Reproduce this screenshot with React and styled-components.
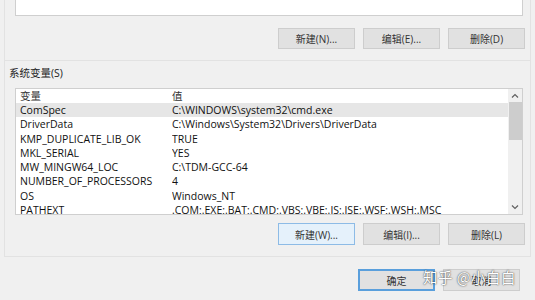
import React from "react"
import styled, { createGlobalStyle } from "styled-components"

const GlobalStyle = createGlobalStyle`
  html, body {
    margin: 0;
    padding: 0;
    background: #f0f0f0;
  }
  body {
    font-family: "Open Sans", "Noto Sans CJK SC", sans-serif;
    color: #111;
  }
`

const Dialog = styled.div`
  position: relative;
  width: 535px;
  height: 300px;
  overflow: hidden;
  background: #f0f0f0;
  padding-left: 4px;
  box-sizing: border-box;
`

const Group = styled.section`
  width: 527px;
  box-sizing: border-box;
  border: 1px solid #e2e2e2;
  border-top: none;
  padding: 0 7px 11px 10px;
  display: flex;
  flex-direction: column;
`

const GroupLabel = styled.div`
  font-size: 10.5px;
  line-height: 14px;
  height: 14px;
  margin: 5px 0 8px -6px;
  color: #222;
`

const ListBox = styled.div`
  position: relative;
  width: 508px;
  height: ${(p) => p.$height}px;
  box-sizing: border-box;
  background: #fff;
  border: 1px solid #cfcfcf;
  border-top: ${(p) => (p.$cut ? "none" : "1px solid #cfcfcf")};
  overflow: hidden;
`

const Rows = styled.div`
  margin-right: 14px;
`

const Row = styled.div`
  display: grid;
  grid-template-columns: 152px 1fr;
  height: ${(p) => (p.$head ? 14 : 14.3)}px;
  line-height: ${(p) => (p.$head ? 14 : 14.3)}px;
  padding-left: 4px;
  font-size: 10.5px;
  white-space: nowrap;
  background: ${(p) => (p.$selected ? "#e6e6e6" : "transparent")};
  color: ${(p) => (p.$head ? "#333" : "#111")};
`

const Cell = styled.span`
  overflow: hidden;
`

const ScrollBar = styled.div`
  position: absolute;
  top: 0;
  right: 0;
  bottom: 0;
  width: 14px;
  background: #f0f0f0;
  display: flex;
  flex-direction: column;
  align-items: center;
`

const Arrow = styled.div`
  height: 13px;
  display: flex;
  align-items: center;
  justify-content: center;
`

const Thumb = styled.div`
  width: 13px;
  height: 38px;
  background: #cdcdcd;
`

const Track = styled.div`
  flex: 1;
`

const ButtonRow = styled.div`
  display: flex;
  justify-content: flex-end;
  gap: 8px;
  margin-top: ${(p) => p.$top}px;
  margin-right: -2px;
`

const Button = styled.div`
  width: 77px;
  height: ${(p) => p.$h || 22}px;
  box-sizing: border-box;
  display: flex;
  align-items: center;
  justify-content: center;
  font-size: 10px;
  color: #333;
  background: ${(p) => (p.$focus ? "#e5f1fb" : "#e1e1e1")};
  border: ${(p) =>
    p.$default
      ? "2px solid #5a9fdc"
      : p.$focus
      ? "1px solid #8dbbe6"
      : "1px solid #cdcdcd"};
`

const Footer = styled.div`
  display: flex;
  justify-content: flex-end;
  gap: 8px;
  margin-top: 12px;
  margin-right: 15px;
`

const Watermark = styled.div`
  position: absolute;
  left: 423px;
  top: 267px;
  font-family: "Noto Sans CJK SC", sans-serif;
  font-size: 14.5px;
  line-height: 20px;
  color: #fff;
  letter-spacing: 0.5px;
  text-shadow: 0 0 2px rgba(0, 0, 0, 0.55), 0 0 1px rgba(0, 0, 0, 0.6);
  white-space: nowrap;
`

const Chevron = ({ up }) => (
  <svg width="8" height="5" viewBox="0 0 8 5">
    <path
      d={up ? "M1 4.5 L4 1.5 L7 4.5" : "M1 0.5 L4 3.5 L7 0.5"}
      fill="none"
      stroke="#606060"
      strokeWidth="1.2"
    />
  </svg>
)

const systemVars = [
  ["ComSpec", "C:\\WINDOWS\\system32\\cmd.exe"],
  ["DriverData", "C:\\Windows\\System32\\Drivers\\DriverData"],
  ["KMP_DUPLICATE_LIB_OK", "TRUE"],
  ["MKL_SERIAL", "YES"],
  ["MW_MINGW64_LOC", "C:\\TDM-GCC-64"],
  ["NUMBER_OF_PROCESSORS", "4"],
  ["OS", "Windows_NT"],
  ["PATHEXT", ".COM;.EXE;.BAT;.CMD;.VBS;.VBE;.JS;.JSE;.WSF;.WSH;.MSC"],
]

export default function App() {
  return (
    <>
      <GlobalStyle />
      <Dialog>
        <Group>
          <ListBox $height={16} $cut />
          <ButtonRow $top={12}>
            <Button $h={21}>新建(N)...</Button>
            <Button $h={21}>编辑(E)...</Button>
            <Button $h={21}>删除(D)</Button>
          </ButtonRow>
        </Group>

        <Group>
          <GroupLabel>系统变量(S)</GroupLabel>
          <ListBox $height={127}>
            <Rows>
              <Row $head>
                <Cell>变量</Cell>
                <Cell>值</Cell>
              </Row>
              {systemVars.map(([name, value], i) => (
                <Row key={name} $selected={i === 0}>
                  <Cell>{name}</Cell>
                  <Cell>{value}</Cell>
                </Row>
              ))}
            </Rows>
            <ScrollBar>
              <Arrow>
                <Chevron up />
              </Arrow>
              <Thumb />
              <Track />
              <Arrow>
                <Chevron />
              </Arrow>
            </ScrollBar>
          </ListBox>
          <ButtonRow $top={8}>
            <Button $focus>新建(W)...</Button>
            <Button>编辑(I)...</Button>
            <Button>删除(L)</Button>
          </ButtonRow>
        </Group>

        <Footer>
          <Button $default>确定</Button>
          <Button>取消</Button>
        </Footer>

        <Watermark>知乎 @小白白</Watermark>
      </Dialog>
    </>
  )
}
